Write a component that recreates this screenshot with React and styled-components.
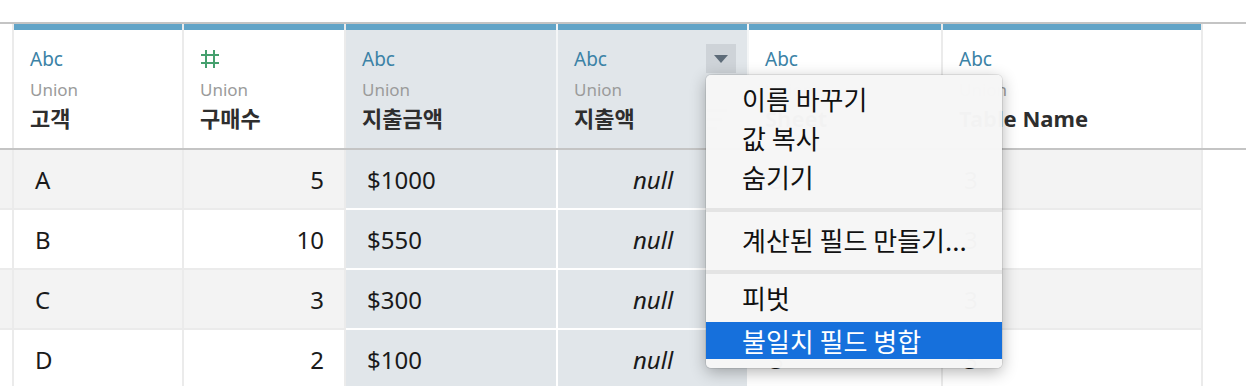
import styled, { createGlobalStyle } from 'styled-components'

const GlobalStyle = createGlobalStyle`
  body {
    margin: 0;
    background: #fff;
    font-family: "Noto Sans", "Noto Sans CJK KR", sans-serif;
  }
`

const columns = [
  { stub: true, w: 14, values: ['', '', '', ''] },
  { w: 170, icon: 'abc', name: '고객', values: ['A', 'B', 'C', 'D'] },
  { w: 162, icon: 'num', name: '구매수', align: 'right', values: ['5', '10', '3', '2'] },
  { w: 212, icon: 'abc', name: '지출금액', sel: true, values: ['$1000', '$550', '$300', '$100'] },
  { w: 191, icon: 'abc', name: '지출액', sel: true, align: 'center', italic: true, menu: true, values: ['null', 'null', 'null', 'null'] },
  { w: 194, icon: 'abc', name: 'Sheet', values: ['3', '3', '3', '3'] },
  { w: 260, icon: 'abc', name: 'Table Name', values: ['3', '3', '3', '3'] },
]

const menuGroups = [
  ['이름 바꾸기', '값 복사', '숨기기'],
  ['계산된 필드 만들기...'],
  ['피벗', '불일치 필드 병합'],
]

const HashIcon = () => (
  <svg width="20" height="20" viewBox="0 0 20 20">
    <g stroke="#45a06e" strokeWidth="2" fill="none">
      <line x1="6" y1="1" x2="6" y2="19" />
      <line x1="14" y1="1" x2="14" y2="19" />
      <line x1="1" y1="6" x2="19" y2="6" />
      <line x1="1" y1="14" x2="19" y2="14" />
    </g>
  </svg>
)

const App = () => {
  return (
    <Page>
      <GlobalStyle />
      <HeaderRow>
        {columns.map((c, i) => (
          <HeaderCell key={i} $w={c.w} $sel={c.sel}>
            {!c.stub && <Bar />}
            {!c.stub && (
              <HeaderBody>
                <TypeLine>{c.icon === 'num' ? <HashIcon /> : 'Abc'}</TypeLine>
                <Source>Union</Source>
                <FieldName>{c.name}</FieldName>
              </HeaderBody>
            )}
            {c.menu && (
              <>
                <DropButton>
                  <svg width="14" height="8" viewBox="0 0 14 8">
                    <path d="M0 0 H14 L7 8 Z" fill="#5d6b78" />
                  </svg>
                </DropButton>
                <SortIcon>
                  <span style={{ width: 20 }} />
                  <span style={{ width: 15 }} />
                  <span style={{ width: 10 }} />
                </SortIcon>
              </>
            )}
          </HeaderCell>
        ))}
      </HeaderRow>

      {[0, 1, 2, 3].map((r) => (
        <Row key={r}>
          {columns.map((c, i) => (
            <Cell
              key={i}
              $w={c.w}
              $stub={c.stub}
              $sel={c.sel}
              $odd={r % 2 === 0}
              $align={c.align}
              $italic={c.italic}
            >
              {c.values[r]}
            </Cell>
          ))}
        </Row>
      ))}

      <Menu>
        {menuGroups.map((group, gi) => (
          <MenuGroup key={gi} $first={gi === 0} $last={gi === menuGroups.length - 1}>
            {group.map((label) => (
              <MenuItem key={label} $active={label === '불일치 필드 병합'}>
                {label}
              </MenuItem>
            ))}
          </MenuGroup>
        ))}
      </Menu>
    </Page>
  )
}

export default App

const Page = styled.div`
  position: relative;
  width: 1246px;
  height: 386px;
  overflow: hidden;
  padding-top: 22px;
  box-sizing: border-box;
`

const HeaderRow = styled.div`
  display: flex;
  border-top: 2px solid #c4c4c4;
  border-bottom: 2px solid #c4c4c4;
  height: 124px;
`

const HeaderCell = styled.div`
  position: relative;
  flex: 0 0 ${(p) => p.$w}px;
  box-sizing: border-box;
  border-right: 2px solid ${(p) => (p.$sel ? '#f4f6f7' : '#ebebeb')};
  background: ${(p) => (p.$sel ? '#e1e6ea' : '#fff')};
  display: flex;
  flex-direction: column;
`

const Bar = styled.div`
  height: 6px;
  background: #62a4c7;
`

const HeaderBody = styled.div`
  padding: 18px 16px 0;
  display: flex;
  flex-direction: column;
`

const TypeLine = styled.div`
  height: 22px;
  display: flex;
  align-items: center;
  font-size: 19px;
  color: #3b82a6;
`

const Source = styled.div`
  margin-top: 9px;
  line-height: 22px;
  font-size: 17px;
  color: #9b9b9b;
`

const FieldName = styled.div`
  margin-top: 4px;
  line-height: 26px;
  font-size: 22px;
  font-weight: 700;
  color: #2e2e2e;
  white-space: nowrap;
`

const DropButton = styled.div`
  position: absolute;
  top: 20px;
  right: 11px;
  width: 30px;
  height: 29px;
  background: #ced3d8;
  display: flex;
  align-items: center;
  justify-content: center;
`

const SortIcon = styled.div`
  position: absolute;
  top: 85px;
  right: 20px;
  width: 20px;
  display: flex;
  flex-direction: column;
  gap: 6px;
  & > span {
    display: block;
    height: 3px;
    background: #c4c8cc;
  }
`

const Row = styled.div`
  display: flex;
`

const Cell = styled.div`
  flex: 0 0 ${(p) => p.$w}px;
  box-sizing: border-box;
  height: 60px;
  border-right: 2px solid ${(p) => (p.$sel ? '#fff' : '#ebebeb')};
  border-bottom: 2px solid ${(p) => (p.$sel ? '#fff' : '#ebebeb')};
  background: ${(p) => (p.$sel ? '#e1e6ea' : p.$odd ? '#f3f3f3' : '#fff')};
  display: flex;
  align-items: center;
  justify-content: ${(p) => (p.$align === 'right' ? 'flex-end' : p.$align === 'center' ? 'center' : 'flex-start')};
  padding: ${(p) => (p.$stub ? '0' : '0 20px 0 21px')};
  font-size: 24px;
  font-style: ${(p) => (p.$italic ? 'italic' : 'normal')};
  color: #1a1a1a;
`

const Menu = styled.div`
  position: absolute;
  left: 706px;
  top: 75px;
  width: 296px;
  box-sizing: border-box;
  padding: 4px 0 9px;
  background: rgba(246, 246, 246, 0.985);
  border-radius: 5px;
  box-shadow: 0 4px 16px rgba(0, 0, 0, 0.3), 0 0 0 1px rgba(0, 0, 0, 0.08);
  z-index: 10;
  font-family: "Noto Sans CJK KR", sans-serif;
`

const MenuGroup = styled.div`
  padding: ${(p) => (p.$first ? '0 0 12px' : p.$last ? '4px 0 0' : '8px 0 11px')};
  border-bottom: ${(p) => (p.$last ? 'none' : '4px solid #e4e4e4')};
`

const MenuItem = styled.div`
  height: ${(p) => (p.$active ? '37px' : '39px')};
  margin-top: ${(p) => (p.$active ? '5px' : '0')};
  display: flex;
  align-items: center;
  padding-left: 36px;
  font-size: 26px;
  color: ${(p) => (p.$active ? '#fff' : '#111')};
  background: ${(p) => (p.$active ? '#1670dc' : 'transparent')};
`
